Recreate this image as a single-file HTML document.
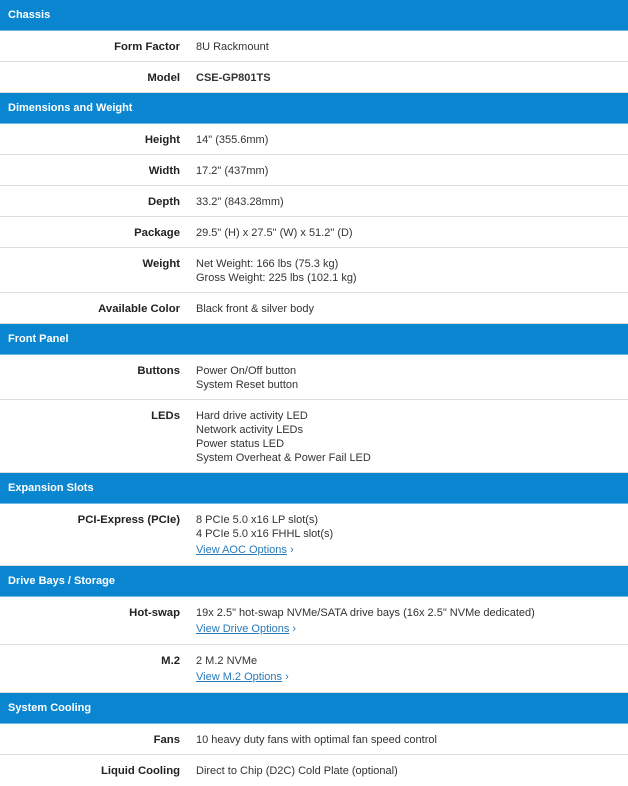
<!DOCTYPE html>
<html><head><style>
body{margin:0;width:628px;height:783px;overflow:hidden;background:#fff;font-family:"Liberation Sans",sans-serif;font-size:11px;color:#333}
.h{background:#0a86d0;color:#fff;font-weight:bold;height:30px;line-height:30px;padding-left:8px;box-sizing:border-box;border-bottom:1px solid #6fb9e6;font-size:11px}
.r{display:flex;border-bottom:1px solid #ddd;box-sizing:border-box;padding-top:9px;line-height:14px}
.l{width:180px;text-align:right;font-weight:bold;color:#222;flex:none;font-size:11.3px}
.v{padding-left:16px}
.a{color:#2a7ab8;text-decoration:underline;display:inline-block;margin-top:2px}
.a+span{color:#2a7ab8}
</style></head><body>
<div class="h" style="height:31px;line-height:30px">Chassis</div>
<div class="r" style="height:31px"><div class="l">Form Factor</div><div class="v">8U Rackmount</div></div>
<div class="r" style="height:31px"><div class="l">Model</div><div class="v"><b>CSE-GP801TS</b></div></div>
<div class="h" style="height:31px">Dimensions and Weight</div>
<div class="r" style="height:31px"><div class="l">Height</div><div class="v">14" (355.6mm)</div></div>
<div class="r" style="height:31px"><div class="l">Width</div><div class="v">17.2" (437mm)</div></div>
<div class="r" style="height:31px"><div class="l">Depth</div><div class="v">33.2" (843.28mm)</div></div>
<div class="r" style="height:31px"><div class="l">Package</div><div class="v">29.5" (H) x 27.5" (W) x 51.2" (D)</div></div>
<div class="r" style="height:45px"><div class="l">Weight</div><div class="v">Net Weight: 166 lbs (75.3 kg)<br>Gross Weight: 225 lbs (102.1 kg)</div></div>
<div class="r" style="height:31px"><div class="l">Available Color</div><div class="v">Black front &amp; silver body</div></div>
<div class="h" style="height:31px">Front Panel</div>
<div class="r" style="height:45px"><div class="l">Buttons</div><div class="v">Power On/Off button<br>System Reset button</div></div>
<div class="r" style="height:73px"><div class="l">LEDs</div><div class="v">Hard drive activity LED<br>Network activity LEDs<br>Power status LED<br>System Overheat &amp; Power Fail LED</div></div>
<div class="h" style="height:31px">Expansion Slots</div>
<div class="r" style="height:62px"><div class="l">PCI-Express (PCIe)</div><div class="v">8 PCIe 5.0 x16 LP slot(s)<br>4 PCIe 5.0 x16 FHHL slot(s)<br><span class="a">View AOC Options</span> <span>›</span></div></div>
<div class="h" style="height:31px">Drive Bays / Storage</div>
<div class="r" style="height:48px"><div class="l">Hot-swap</div><div class="v">19x 2.5" hot-swap NVMe/SATA drive bays (16x 2.5" NVMe dedicated)<br><span class="a">View Drive Options</span> <span>›</span></div></div>
<div class="r" style="height:48px"><div class="l">M.2</div><div class="v">2 M.2 NVMe<br><span class="a">View M.2 Options</span> <span>›</span></div></div>
<div class="h" style="height:31px">System Cooling</div>
<div class="r" style="height:31px"><div class="l">Fans</div><div class="v">10 heavy duty fans with optimal fan speed control</div></div>
<div class="r" style="height:31px;border:none"><div class="l">Liquid Cooling</div><div class="v">Direct to Chip (D2C) Cold Plate (optional)</div></div>
</body></html>
